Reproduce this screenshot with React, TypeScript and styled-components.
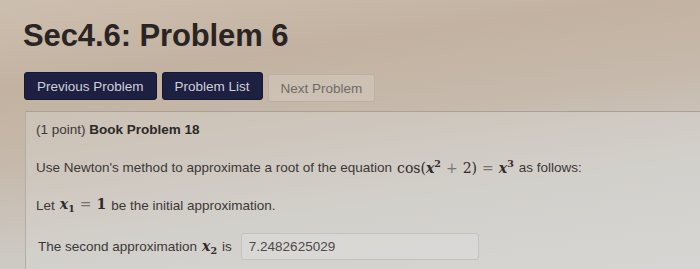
import React from "react";
import styled, { createGlobalStyle } from "styled-components";

const Global = createGlobalStyle`
  html, body {
    margin: 0;
    padding: 0;
  }
  body {
    width: 700px;
    height: 269px;
    overflow: hidden;
    font-family: "Liberation Sans", Arial, sans-serif;
    background: linear-gradient(172deg, #cdbfb0 0%, #c3b2a1 25%, #c6b9ab 45%, #cdc9c3 70%, #d3d2d0 100%);
  }
`;

const Page = styled.div`
  padding: 18px 0 0 23px;
  display: flex;
  flex-direction: column;
`;

const Title = styled.h1`
  margin: 0;
  font-size: 31px;
  line-height: 36px;
  font-weight: 700;
  color: #2a2422;
  letter-spacing: -0.1px;
`;

const Toolbar = styled.div`
  display: flex;
  gap: 5px;
  margin-top: 18px;
  padding-left: 1px;
  align-items: flex-start;
`;

const NavButton = styled.button<{ $disabled?: boolean }>`
  height: 28px;
  padding: 0 12px;
  font-family: "Liberation Sans", Arial, sans-serif;
  font-size: 13.5px;
  border-radius: 3px;
  border: 1px solid ${(p) => (p.$disabled ? "#b9b0a8" : "#15172e")};
  background: ${(p) => (p.$disabled ? "rgba(214, 206, 198, 0.45)" : "#1d2040")};
  color: ${(p) => (p.$disabled ? "#716b66" : "#cfd0da")};
  margin-top: ${(p) => (p.$disabled ? "2px" : "0")};
  cursor: pointer;
`;

const Panel = styled.div`
  margin-top: 9px;
  margin-left: 2px;
  border-top: 1px solid #aaa096;
  border-left: 1px solid #b5aca4;
  background: rgba(222, 221, 219, 0.35);
  padding: 7px 0 0 10px;
  display: flex;
  flex-direction: column;
  gap: 18px;
  color: #3b3836;
  font-size: 13.5px;
  height: 200px;
`;

const Line = styled.div<{ $indent?: number }>`
  display: flex;
  align-items: center;
  min-height: 20px;
  padding-left: ${(p) => p.$indent ?? 0}px;
  white-space: pre;
`;

const Bold = styled.span`
  font-weight: 700;
  color: #2c2927;
`;

const Math = styled.span`
  font-family: "DejaVu Serif", "Liberation Serif", serif;
  font-size: 14px;
  color: #2f2c2a;
  margin: 0 5px;
`;

const Var = styled.i`
  font-family: "DejaVu Serif", "Liberation Serif", serif;
  font-style: italic;
  font-weight: 700;
`;

const Sub = styled.sub`
  font-size: 9.5px;
  font-weight: 700;
  vertical-align: -3px;
`;

const Sup = styled.sup`
  font-size: 9.5px;
  font-weight: 700;
  vertical-align: 6px;
`;

const Op = styled.span`
  color: #77736f;
  margin: 0 5px;
`;

const Answer = styled.div`
  margin-left: 9px;
  width: 238px;
  height: 27px;
  box-sizing: border-box;
  border: 1px solid #c4c2bf;
  border-radius: 3px;
  background: rgba(226, 226, 224, 0.4);
  display: flex;
  align-items: center;
  padding-left: 7px;
  font-size: 13.5px;
  color: #4d4a48;
`;

export default function App() {
  return (
    <>
      <Global />
      <Page>
        <Title>Sec4.6: Problem 6</Title>
        <Toolbar>
          <NavButton>Previous Problem</NavButton>
          <NavButton>Problem List</NavButton>
          <NavButton $disabled>Next Problem</NavButton>
        </Toolbar>
        <Panel>
          <Line>
            (1 point) <Bold>Book Problem 18</Bold>
          </Line>
          <Line>
            Use Newton's method to approximate a root of the equation
            <Math>
              cos(<Var>x</Var>
              <Sup>2</Sup>
              <Op>+</Op>2)<Op>=</Op>
              <Var>x</Var>
              <Sup>3</Sup>
            </Math>
            as follows:
          </Line>
          <Line>
            Let
            <Math>
              <Var>x</Var>
              <Sub>1</Sub>
              <Op>=</Op>
              <b>1</b>
            </Math>
            be the initial approximation.
          </Line>
          <Line $indent={2}>
            The second approximation
            <Math>
              <Var>x</Var>
              <Sub>2</Sub>
            </Math>
            is
            <Answer>7.2482625029</Answer>
          </Line>
        </Panel>
      </Page>
    </>
  );
}
